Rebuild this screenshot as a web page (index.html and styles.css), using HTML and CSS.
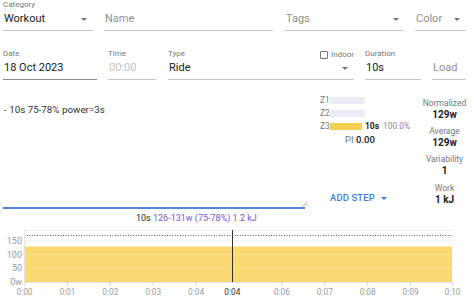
FILE: index.html
```html
<!DOCTYPE html>
<html>
<head>
<meta charset="utf-8">
<link rel="stylesheet" href="styles.css">
</head>
<body>
<div class="row row1">
  <div class="field f-category">
    <div class="label">Category</div>
    <div class="input"><span class="value">Workout</span><span class="arrow"></span></div>
  </div>
  <div class="field f-name">
    <div class="label"></div>
    <div class="input"><span class="ph">Name</span></div>
  </div>
  <div class="field f-tags">
    <div class="label"></div>
    <div class="input"><span class="ph">Tags</span><span class="arrow"></span></div>
  </div>
  <div class="field f-color">
    <div class="label"></div>
    <div class="input"><span class="ph">Color</span><span class="arrow"></span></div>
  </div>
</div>
<div class="row row2">
  <div class="field f-date">
    <div class="label">Date</div>
    <div class="input dark"><span class="value">18 Oct 2023</span></div>
  </div>
  <div class="field f-time">
    <div class="label">Time</div>
    <div class="input"><span class="ph light">00:00</span></div>
  </div>
  <div class="field f-type">
    <div class="label split"><span>Type</span><span class="indoor"><span class="check"></span>Indoor</span></div>
    <div class="input"><span class="value">Ride</span><span class="arrow"></span></div>
  </div>
  <div class="field f-duration">
    <div class="label">Duration</div>
    <div class="input"><span class="value">10s</span></div>
  </div>
  <div class="field f-load">
    <div class="label"></div>
    <div class="input"><span class="ph">Load</span></div>
  </div>
</div>
<div class="main">
  <div class="desc">
    <div class="desc-text">- 10s 75-78% power=3s</div>
    <svg class="grip" width="6" height="6" viewBox="0 0 6 6"><path d="M5.5 0.5 L0.5 5.5 M5.5 3 L3 5.5" stroke="#999" stroke-width="0.8" fill="none"/></svg>
  </div>
  <div class="zones">
    <div class="zrow"><span class="zl">Z1</span><span class="zbar"></span></div>
    <div class="zrow"><span class="zl">Z2</span><span class="zbar"></span></div>
    <div class="zrow"><span class="zl">Z3</span><span class="zbar full"></span><b class="zt">10s</b><span class="zp">100.0%</span></div>
    <div class="pi">PI <b>0.00</b></div>
    <div class="addstep">ADD STEP<span class="arrow blue"></span></div>
  </div>
  <div class="stats">
    <div class="stat"><div class="sl">Normalized</div><div class="sv">129w</div></div>
    <div class="stat"><div class="sl">Average</div><div class="sv">129w</div></div>
    <div class="stat"><div class="sl">Variability</div><div class="sv">1</div></div>
    <div class="stat"><div class="sl">Work</div><div class="sv">1 kJ</div></div>
  </div>
</div>
<div class="tagline"><span class="dk">10s</span> <span class="pu">126-131w (75-78%) 1.2 kJ</span></div>
<svg class="chart" width="474" height="81" viewBox="0 226 474 81">
  <line x1="24" y1="230.5" x2="453" y2="230.5" stroke="#ececec"/>
  <line x1="24" y1="241" x2="453" y2="241" stroke="#ececec"/>
  <rect x="24" y="246.5" width="428" height="35.5" fill="#f9d972"/>
  <line x1="24" y1="254.6" x2="452" y2="254.6" stroke="#fff" stroke-opacity="0.25"/>
  <line x1="24" y1="268.3" x2="452" y2="268.3" stroke="#fff" stroke-opacity="0.25"/>
  <line x1="24" y1="235.5" x2="453" y2="235.5" stroke="#555" stroke-dasharray="1 1.6"/>
  <line x1="24" y1="282.5" x2="453" y2="282.5" stroke="#e0e0e0"/>
  <line x1="24.5" y1="230" x2="24.5" y2="286" stroke="#e4e4e4"/>
  <g stroke="#d6d6d6">
    <line x1="67.4" y1="282" x2="67.4" y2="286"/>
    <line x1="110.3" y1="282" x2="110.3" y2="286"/>
    <line x1="153.2" y1="282" x2="153.2" y2="286"/>
    <line x1="196.1" y1="282" x2="196.1" y2="286"/>
    <line x1="281.9" y1="282" x2="281.9" y2="286"/>
    <line x1="324.8" y1="282" x2="324.8" y2="286"/>
    <line x1="367.7" y1="282" x2="367.7" y2="286"/>
    <line x1="410.6" y1="282" x2="410.6" y2="286"/>
    <line x1="452.5" y1="282" x2="452.5" y2="286"/>
  </g>
  <line x1="232.5" y1="230" x2="232.5" y2="282" stroke="#333"/>
  <g class="ylab" text-anchor="end">
    <text x="22" y="244">150</text>
    <text x="22" y="257.5">100</text>
    <text x="22" y="271.2">50</text>
    <text x="22" y="285.2">0w</text>
  </g>
  <g class="xlab" text-anchor="middle">
    <text x="24.5" y="294.7">0:00</text>
    <text x="67.4" y="294.7">0:01</text>
    <text x="110.3" y="294.7">0:02</text>
    <text x="153.2" y="294.7">0:03</text>
    <text x="196.1" y="294.7">0:04</text>
    <text x="232.3" y="294.7" class="cur">0:04</text>
    <text x="281.9" y="294.7">0:06</text>
    <text x="324.8" y="294.7">0:07</text>
    <text x="367.7" y="294.7">0:08</text>
    <text x="410.6" y="294.7">0:09</text>
    <text x="452.5" y="294.7">0:10</text>
  </g>
</svg>
</body>
</html>
```

FILE: styles.css
```css
* { box-sizing: content-box; }
html, body { margin: 0; padding: 0; background: #fff; }
body {
  width: 474px;
  height: 307px;
  overflow: hidden;
  font-family: Roboto, "Noto Sans", sans-serif;
  color: #222;
}
.row { display: flex; padding-left: 3px; }
.row2 { margin-top: 18px; }
.field { display: flex; flex-direction: column; }
.label {
  height: 10px;
  line-height: 10px;
  font-size: 8px;
  color: #777;
  white-space: nowrap;
}
.label.split { display: flex; justify-content: space-between; align-items: center; }
.indoor { display: flex; align-items: center; gap: 3px; color: #777; font-size: 8px; margin-top: 1px; }
.check {
  width: 6px; height: 6px;
  border: 1px solid #777;
  border-radius: 1px;
}
.input {
  display: flex;
  align-items: center;
  justify-content: space-between;
  padding-top: 2px;
  padding-bottom: 4px;
  height: 14px;
  line-height: 14px;
  font-size: 11px;
  border-bottom: 1px solid #c4c4c4;
  white-space: nowrap;
}
.input.dark { border-bottom-color: #8c8c8c; }
.value { color: #212121; padding-left: 1px; }
.ph { color: #8f8f8f; padding-left: 1px; }
.ph.light { color: #c2c2c2; }
.arrow {
  width: 0; height: 0;
  border-left: 3px solid transparent;
  border-right: 3px solid transparent;
  border-top: 3px solid #757575;
  margin-right: 6px;
}
.f-tags .arrow { margin-right: 4px; }
.arrow.blue { border-top-color: #3f7fd3; margin-left: 6px; margin-right: 0; }

.f-category { width: 90px; }
.f-name { width: 169px; margin-left: 11px; }
.f-tags { width: 118px; margin-left: 12px; }
.f-color { width: 51px; margin-left: 12px; }

.f-date { width: 94px; }
.f-time { width: 48px; margin-left: 11px; }
.f-type { width: 186px; margin-left: 12px; }
.f-duration { width: 56px; margin-left: 11px; }
.f-load { width: 34px; margin-left: 11px; }

.main { display: flex; }
.desc {
  position: relative;
  width: 302px;
  height: 127px;
  margin-left: 3px;
  border-bottom: 2px solid #5187d8;
}
.desc-text {
  margin-top: 24px;
  font-size: 9.8px;
  line-height: 12px;
  color: #333;
  padding-left: 1px;
}
.grip { position: absolute; right: -3px; bottom: 0px; }

.zones {
  width: 90px;
  margin-left: 15px;
  padding-top: 14px;
  display: flex;
  flex-direction: column;
  font-size: 8.3px;
  color: #777;
}
.zrow { display: flex; align-items: center; height: 13px; line-height: 13px; }
.zl { width: 10px; }
.zbar { width: 35px; height: 7px; background: #ecebf6; }
.zbar.full { background: #f6d04f; }
.zt { color: #222; font-size: 8.5px; margin-left: 3px; }
.zp { margin-left: 4px; color: #8a8a8a; }
.pi { height: 14px; line-height: 14px; width: 80px; text-align: center; font-size: 9.5px; color: #777; }
.pi b { color: #222; font-weight: 500; }
.addstep {
  margin-top: 45px;
  margin-left: 10px;
  display: flex;
  align-items: center;
  font-size: 9.5px;
  font-weight: 500;
  color: #3f7fd3;
  letter-spacing: 0.1px;
  line-height: 12px;
}

.stats {
  width: 46px;
  margin-left: auto;
  margin-right: 6.5px;
  padding-top: 17px;
  text-align: center;
}
.stat { margin-bottom: 5.2px; }
.sl { font-size: 8.5px; line-height: 12px; color: #777; white-space: nowrap; }
.sv { font-size: 10px; line-height: 11px; font-weight: 700; color: #222; }

.tagline {
  margin-top: 2px;
  padding-left: 136px;
  font-size: 9px;
  line-height: 12px;
  white-space: nowrap;
}
.dk { color: #222; }
.pu { color: #7a55c7; }

.chart { display: block; margin-top: 2px; }
.ylab text { font-family: Roboto, sans-serif; font-size: 9px; fill: #999; }
.xlab text { font-family: Roboto, sans-serif; font-size: 8.3px; fill: #9c9c9c; }
.xlab text.cur { fill: #333; }
```
